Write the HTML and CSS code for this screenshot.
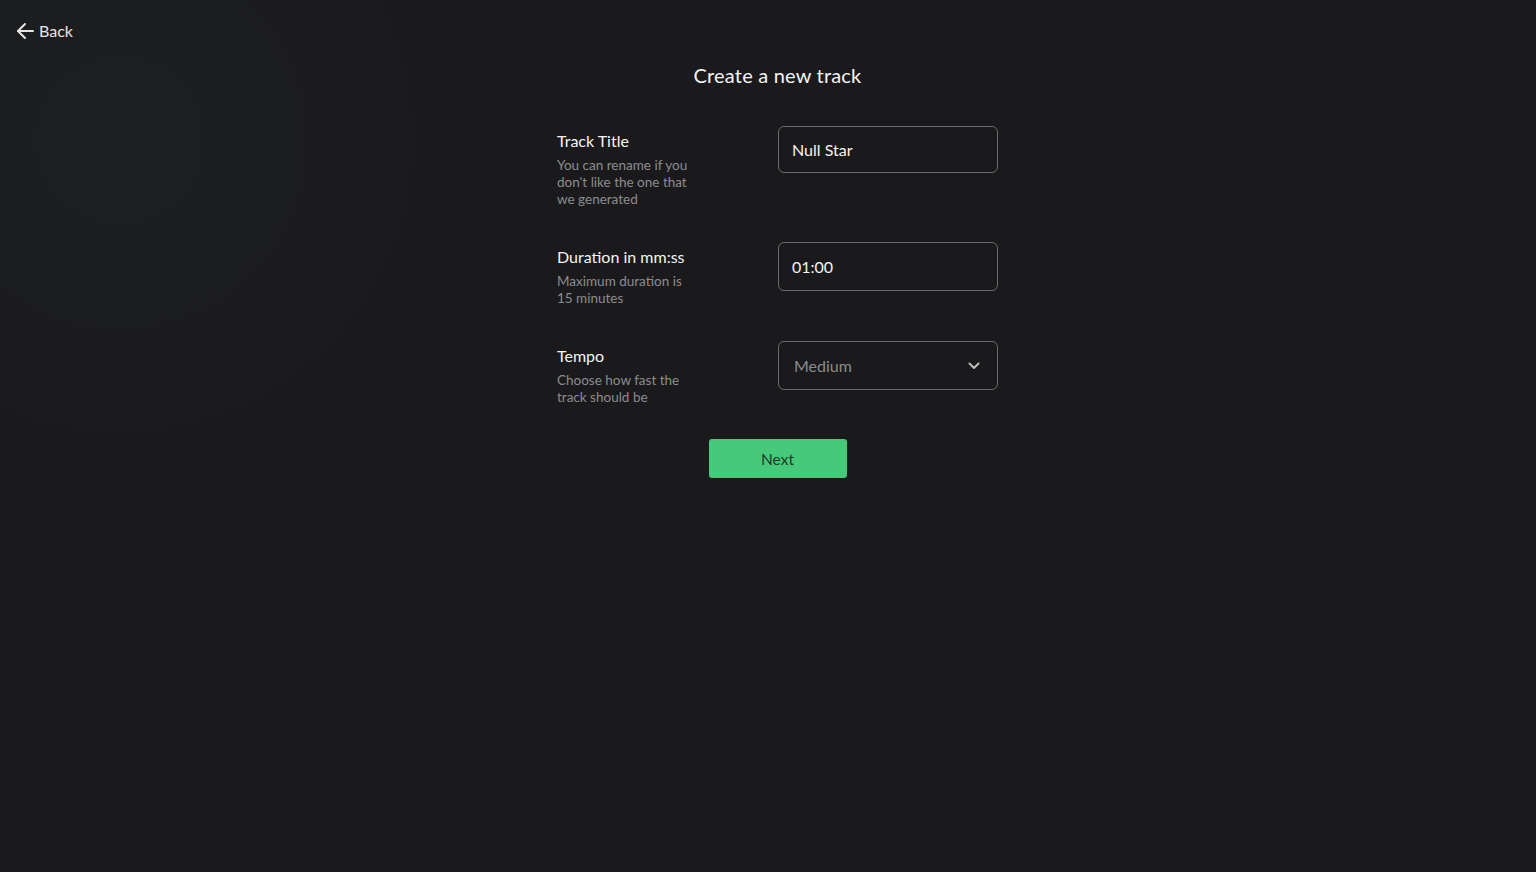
FILE: index.html
```html
<!DOCTYPE html>
<html lang="en">
<head>
    <meta charset="UTF-8">
    <meta name="viewport" content="width=device-width, initial-scale=1.0">
    <title>Create a new track</title>
    <link rel="stylesheet" href="styles.css">
</head>
<body>

<div class="topbar">
    <a class="back-link" href="#">
        <svg width="19" height="18" viewBox="0 0 19 18" fill="none" stroke="currentColor" stroke-width="2" stroke-linecap="round" stroke-linejoin="round">
            <path d="M17 9H2"/>
            <path d="M9 2L2 9l7 7"/>
        </svg>
        <span>Back</span>
    </a>
</div>

<div class="page">
    <h2>Create a new track</h2>
    <form id="trackForm" class="track-form">
        <div class="form-row">
            <div class="form-info">
                <label for="title">Track Title</label>
                <p>You can rename if you don't like the one that we generated</p>
            </div>
            <input type="text" id="title" name="title" value="Null Star" class="field">
        </div>
        <div class="form-row">
            <div class="form-info">
                <label for="duration">Duration in mm:ss</label>
                <p>Maximum duration is 15 minutes</p>
            </div>
            <input type="text" id="duration" name="duration" value="01:00" class="field tall">
        </div>
        <div class="form-row">
            <div class="form-info">
                <label for="tempo">Tempo</label>
                <p>Choose how fast the track should be</p>
            </div>
            <div class="select-wrap">
                <select id="tempo" name="tempo" class="field tall">
                    <option value="slow">Slow</option>
                    <option value="medium" selected>Medium</option>
                    <option value="fast">Fast</option>
                </select>
                <svg class="chevron" width="12" height="8" viewBox="0 0 12 8" fill="none" stroke="currentColor" stroke-width="2" stroke-linecap="round" stroke-linejoin="round">
                    <path d="M1.5 1.5L6 6l4.5-4.5"/>
                </svg>
            </div>
        </div>
        <div class="actions">
            <button type="submit">Next</button>
        </div>
    </form>
</div>

<script>
    document.getElementById('trackForm').addEventListener('submit', function(event) {
        event.preventDefault();
    });
</script>

</body>
</html>
```

FILE: styles.css
```css
* {
    box-sizing: border-box;
}
html, body {
    height: 100%;
}
body {
    font-family: 'Lato', 'Noto Sans', sans-serif;
    background-color: #1a1a1c;
    background-image: radial-gradient(circle at 120px 140px, #1d1f21 0%, #1a1a1c 320px);
    color: #f2f2f2;
    margin: 0;
}
.topbar {
    height: 62px;
    padding: 21px 0 0 16px;
}
.back-link {
    display: inline-flex;
    align-items: center;
    gap: 4px;
    color: #e6e6e6;
    text-decoration: none;
    font-size: 16px;
}
.page {
    width: 441px;
    margin-left: 557px;
}
h2 {
    text-align: center;
    font-size: 20px;
    font-weight: 400;
    color: #f4f4f4;
    margin: 1px 0 0;
    letter-spacing: 0.2px;
}
.track-form {
    margin-top: 39px;
}
.form-row {
    display: grid;
    grid-template-columns: 221px 220px;
    align-items: start;
    margin-bottom: 34px;
}
.form-row:nth-child(3) {
    margin-bottom: 33px;
}
.form-info {
    padding-top: 5px;
}
label {
    display: block;
    font-size: 16px;
    line-height: 19px;
    color: #f4f4f4;
    margin-bottom: 7px;
}
.form-info p {
    margin: 0;
    width: 135px;
    font-size: 13.5px;
    line-height: 17px;
    color: #8c8c8c;
}
.field {
    width: 220px;
    height: 47px;
    padding: 0 13px;
    border-radius: 6px;
    border: 1px solid #6b6b6b;
    background: transparent;
    color: #f4f4f4;
    font-family: inherit;
    font-size: 16px;
    outline: none;
}
.field.tall {
    height: 49px;
}
.select-wrap {
    position: relative;
}
select.field {
    appearance: none;
    -webkit-appearance: none;
    color: #8a8a8a;
    padding-left: 15px;
}
.chevron {
    position: absolute;
    right: 18px;
    top: 21px;
    color: #bdbdbd;
    pointer-events: none;
}
.actions {
    display: flex;
    justify-content: center;
}
button {
    width: 138px;
    height: 39px;
    background-color: #46c979;
    color: #1f3b2b;
    border: none;
    border-radius: 3px;
    font-family: inherit;
    font-size: 15.5px;
    cursor: pointer;
}
button:hover {
    background-color: #3db86c;
}
```
